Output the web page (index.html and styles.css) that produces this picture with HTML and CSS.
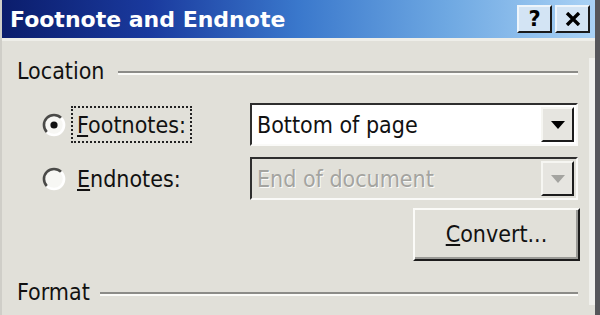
FILE: index.html
```html
<!DOCTYPE html>
<html lang="en">
<head>
    <meta charset="UTF-8">
    <title>Footnote and Endnote</title>
    <link rel="stylesheet" href="styles.css">
</head>
<body>
    <div class="dialog">
        <!-- Title bar -->
        <div class="titlebar">
            <span class="title">Footnote and Endnote</span>
            <div class="caption-buttons">
                <span class="cap-btn help">?</span>
                <span class="cap-btn">
                    <svg width="16" height="14" viewBox="0 0 16 14">
                        <path d="M2 1 L14 13 M14 1 L2 13" stroke="#000" stroke-width="3.4" fill="none"/>
                    </svg>
                </span>
            </div>
        </div>

        <div class="content">
            <!-- Location group -->
            <div class="group-head">
                <span>Location</span>
                <span class="rule"></span>
            </div>

            <div class="location-grid">
                <div class="option">
                    <svg class="radio" width="24" height="24" viewBox="0 0 24 24">
                        <circle cx="12" cy="12" r="10" fill="#f7f7f4"/>
                        <path d="M4.9 19.1 A10 10 0 0 1 19.1 4.9" stroke="#4a4a48" stroke-width="2.6" fill="none"/>
                        <path d="M19.1 4.9 A10 10 0 0 1 4.9 19.1" stroke="#ffffff" stroke-width="2.6" fill="none"/>
                        <circle cx="12" cy="12" r="3.6" fill="#111"/>
                    </svg>
                    <span class="label focused"><u>F</u>ootnotes:</span>
                </div>
                <div class="combo">
                    <span class="combo-text">Bottom of page</span>
                    <span class="drop">
                        <svg width="14" height="8" viewBox="0 0 14 8"><path d="M0 0 H14 L7 8 Z" fill="#000"/></svg>
                    </span>
                </div>

                <div class="option">
                    <svg class="radio" width="24" height="24" viewBox="0 0 24 24">
                        <circle cx="12" cy="12" r="10" fill="#f7f7f4"/>
                        <path d="M4.9 19.1 A10 10 0 0 1 19.1 4.9" stroke="#4a4a48" stroke-width="2.6" fill="none"/>
                        <path d="M19.1 4.9 A10 10 0 0 1 4.9 19.1" stroke="#ffffff" stroke-width="2.6" fill="none"/>
                    </svg>
                    <span class="label"><u>E</u>ndnotes:</span>
                </div>
                <div class="combo disabled">
                    <span class="combo-text">End of document</span>
                    <span class="drop">
                        <svg width="14" height="8" viewBox="0 0 14 8"><path d="M0 0 H14 L7 8 Z" fill="#a4a4a0"/></svg>
                    </span>
                </div>
            </div>

            <div class="button-row">
                <button class="push"><u>C</u>onvert...</button>
            </div>

            <!-- Format group -->
            <div class="group-head format">
                <span>Format</span>
                <span class="rule"></span>
            </div>
        </div>
    </div>
</body>
</html>
```

FILE: styles.css
```css
body {
    margin: 0;
    background-color: #e1e0d9;
}
.dialog {
    width: 600px;
    height: 315px;
    box-sizing: border-box;
    overflow: hidden;
    background-color: #e1e0d9;
    border-left: 2px solid #cfcec8;
    border-right: 5px solid #56565a;
    font-family: "DejaVu Sans Condensed", "DejaVu Sans", sans-serif;
    font-size: 23px;
    line-height: 26px;
    color: #111;
}
.titlebar {
    height: 38px;
    display: flex;
    align-items: center;
    justify-content: space-between;
    padding: 0 5px 0 8px;
    background: linear-gradient(to right, #0b1d6c 0%, #1a3a9e 25%, #3a78cc 50%, #6ea8e2 75%, #aad2f5 100%);
    border-bottom: 3px solid #eeeee9;
}
.title {
    font-family: "DejaVu Sans", sans-serif;
    font-weight: bold;
    font-size: 22px;
    color: #fff;
    padding-top: 2px;
}
.caption-buttons {
    display: flex;
    gap: 3px;
}
.cap-btn {
    width: 35px;
    height: 28px;
    box-sizing: border-box;
    display: flex;
    align-items: center;
    justify-content: center;
    background-color: #d3e4f4;
    border-top: 2px solid #eef5fb;
    border-left: 2px solid #eef5fb;
    border-right: 2px solid #1a1a1a;
    border-bottom: 2px solid #1a1a1a;
}
.help {
    font-family: "DejaVu Sans", sans-serif;
    font-weight: bold;
    font-size: 21px;
    color: #000;
}
.content {
    padding: 0 17px 0 15px;
    box-shadow: inset -6px 0 0 #f0f0ec;
}
.group-head {
    display: flex;
    align-items: center;
    margin-top: 17px;
}
.group-head.format {
    margin-top: 18px;
}
.rule {
    flex: 1;
    height: 2px;
    margin: 3px 0 0 14px;
    background-color: #8c8c88;
    border-bottom: 2px solid #fbfbf8;
}
.format .rule {
    margin-left: 10px;
}
.location-grid {
    display: grid;
    grid-template-columns: 208px 1fr;
    row-gap: 11px;
    margin: 19px 0 0 25px;
}
.option {
    display: flex;
    align-items: center;
}
.label {
    margin-left: 5px;
    padding: 4px 4px 3px 4px;
    border: 2px dotted transparent;
}
.label.focused {
    border-color: #222;
}
.combo {
    height: 43px;
    box-sizing: border-box;
    display: flex;
    align-items: stretch;
    padding: 2px;
    background-color: #fff;
    border-top: 2px solid #2e2e2e;
    border-left: 2px solid #2e2e2e;
    border-right: 2px solid #fafaf8;
    border-bottom: 2px solid #fafaf8;
}
.combo-text {
    flex: 1;
    display: flex;
    align-items: center;
    padding-left: 3px;
}
.combo.disabled {
    background-color: #e1e0d9;
}
.combo.disabled .combo-text {
    color: #a4a4a0;
    text-shadow: 1px 1px 0 #fafaf8;
}
.drop {
    width: 33px;
    box-sizing: border-box;
    display: flex;
    align-items: center;
    justify-content: center;
    background-color: #e6e5e0;
    border-top: 2px solid #f6f6f2;
    border-left: 2px solid #f6f6f2;
    border-right: 2px solid #1c1c1c;
    border-bottom: 2px solid #1c1c1c;
}
.button-row {
    display: flex;
    justify-content: flex-end;
    margin: 8px -2px 0 0;
}
.push {
    width: 167px;
    height: 53px;
    box-sizing: border-box;
    font: inherit;
    color: #111;
    background-color: #e1e0d9;
    border-top: 2px solid #fbfbf8;
    border-left: 2px solid #fbfbf8;
    border-right: 2px solid #1c1c1c;
    border-bottom: 2px solid #1c1c1c;
    box-shadow: inset -2px -2px 0 #9a9a96;
    padding: 0 0 2px 0;
}
```
